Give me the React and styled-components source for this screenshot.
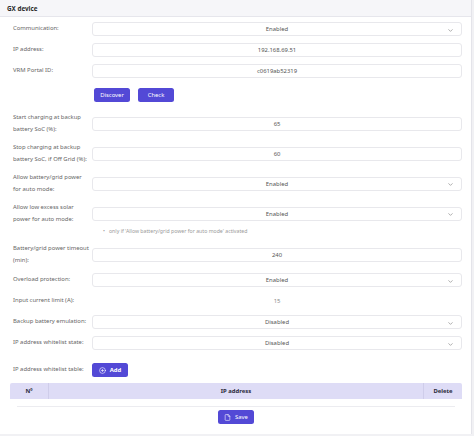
import styled, { createGlobalStyle } from "styled-components";
import { CirclePlus, File, ChevronDown } from "lucide-react";

const GlobalStyle = createGlobalStyle`
  body {
    margin: 0;
    background: #f1f1f4;
    font-family: "Noto Sans", "Open Sans", sans-serif;
    color: #4b4b4b;
  }
`;

const Card = styled.div`
  width: 471px;
  background: #fff;
  border-right: 1px solid #e4e4ea;
  padding-bottom: 10px;
`;

const CardHeader = styled.div`
  height: 16px;
  display: flex;
  align-items: center;
  padding-left: 7px;
  background: #f6f6f9;
  border-bottom: 1px solid #e6e6ec;
  font-size: 6.3px;
  font-weight: 700;
  color: #2b2b2b;
`;

const Body = styled.div`
  display: flex;
  flex-direction: column;
  gap: 7px;
  padding: 5px 9px 0 10px;
`;

const Row = styled.div`
  display: grid;
  grid-template-columns: 82px 1fr;
  align-items: center;
  min-height: 14px;
  margin-top: ${({ $top }) => $top || 0}px;
`;

const Label = styled.div`
  padding-left: 3px;
  padding-right: 2px;
  font-size: 5.9px;
  line-height: 11.5px;
  color: #666;
`;

const Field = styled.div`
  position: relative;
  height: 14px;
  border: 1px solid #e8e8ec;
  border-radius: 3px;
  box-sizing: border-box;
  display: flex;
  align-items: center;
  justify-content: center;
  font-size: 5.9px;
  color: #555;
  background: #fff;
`;

const Chevron = styled(ChevronDown)`
  position: absolute;
  right: 7px;
  top: 3.5px;
  color: #777;
`;

const PlainValue = styled.div`
  text-align: center;
  font-size: 5.9px;
  color: #8a8a8a;
`;

const ButtonRow = styled.div`
  display: flex;
  gap: 8px;
  padding-left: 84px;
  margin: 3px 0 3px;
`;

const Actions = styled.div`
  display: flex;
`;

const Button = styled.button`
  height: 14px;
  min-width: 36px;
  padding: 0 ${({ $pad }) => $pad || 6}px;
  border: none;
  border-radius: 2.5px;
  background: #5349d6;
  color: #fff;
  font-family: inherit;
  font-size: 5.9px;
  font-weight: ${({ $bold }) => ($bold ? 700 : 400)};
  display: inline-flex;
  align-items: center;
  justify-content: center;
  gap: 4px;
  cursor: pointer;
`;

const Hint = styled.div`
  margin: -5px 0 1px 93px;
  font-size: 5.2px;
  line-height: 8px;
  color: #9a9a9a;
  &::before {
    content: "•";
    margin-right: 4px;
  }
`;

const Table = styled.div`
  display: grid;
  grid-template-columns: 38px 1fr 39px;
  height: 16px;
  margin-top: -1px;
  background: #dedcf6;
  border-radius: 2px;
  font-size: 5.9px;
  font-weight: 700;
  color: #2b2b3b;
  border-bottom: 7px solid #fff;
  box-shadow: 0 8px 0 -7px #ececf0;
`;

const Th = styled.div`
  display: flex;
  align-items: center;
  justify-content: center;
  border-left: ${({ $first }) => ($first ? "none" : "1px solid #cfcdea")};
`;

const Footer = styled.div`
  display: flex;
  justify-content: center;
  margin-top: -3px;
`;

const selects = [
  ["Communication:", "Enabled", true],
  ["IP address:", "192.168.69.51", false],
  ["VRM Portal ID:", "c0619ab52319", false],
];

export default function App() {
  return (
    <>
      <GlobalStyle />
      <Card>
        <CardHeader>GX device</CardHeader>
        <Body>
          {selects.map(([label, value, isSelect]) => (
            <Row key={label}>
              <Label>{label}</Label>
              <Field>
                {value}
                {isSelect && <Chevron size={7} strokeWidth={2} />}
              </Field>
            </Row>
          ))}
          <ButtonRow>
            <Button>Discover</Button>
            <Button>Check</Button>
          </ButtonRow>
          <Row>
            <Label>Start charging at backup battery SoC (%):</Label>
            <Field>65</Field>
          </Row>
          <Row>
            <Label>Stop charging at backup battery SoC, if Off Grid (%):</Label>
            <Field>60</Field>
          </Row>
          <Row>
            <Label>Allow battery/grid power for auto mode:</Label>
            <Field>
              Enabled
              <Chevron size={7} strokeWidth={2} />
            </Field>
          </Row>
          <Row>
            <Label>Allow low excess solar power for auto mode:</Label>
            <Field>
              Enabled
              <Chevron size={7} strokeWidth={2} />
            </Field>
          </Row>
          <Hint>only if 'Allow battery/grid power for auto mode' activated</Hint>
          <Row>
            <Label>Battery/grid power timeout (min):</Label>
            <Field>240</Field>
          </Row>
          <Row>
            <Label>Overload protection:</Label>
            <Field>
              Enabled
              <Chevron size={7} strokeWidth={2} />
            </Field>
          </Row>
          <Row>
            <Label>Input current limit (A):</Label>
            <PlainValue>15</PlainValue>
          </Row>
          <Row>
            <Label>Backup battery emulation:</Label>
            <Field>
              Disabled
              <Chevron size={7} strokeWidth={2} />
            </Field>
          </Row>
          <Row>
            <Label>IP address whitelist state:</Label>
            <Field>
              Disabled
              <Chevron size={7} strokeWidth={2} />
            </Field>
          </Row>
          <Row $top={6}>
            <Label>IP address whitelist table:</Label>
            <Actions>
              <Button $bold $pad={5}>
                <CirclePlus size={7} strokeWidth={2} />
                Add
              </Button>
            </Actions>
          </Row>
          <Table>
            <Th $first>Nº</Th>
            <Th>IP address</Th>
            <Th>Delete</Th>
          </Table>
          <Footer>
            <Button>
              <File size={7} strokeWidth={2} />
              Save
            </Button>
          </Footer>
        </Body>
      </Card>
    </>
  );
}
